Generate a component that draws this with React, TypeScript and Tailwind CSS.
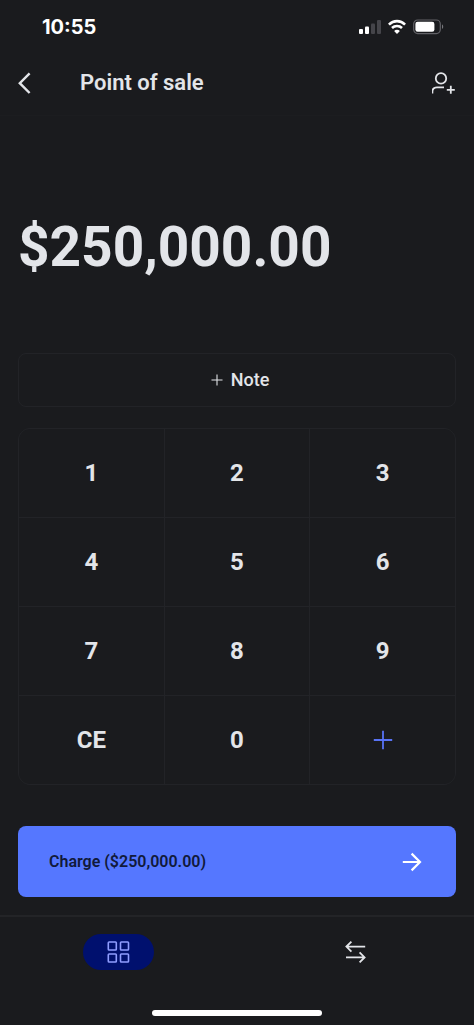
import React, { useState } from "react";

const KEYS = [
	"1",
	"2",
	"3",
	"4",
	"5",
	"6",
	"7",
	"8",
	"9",
	"CE",
	"0",
	"+",
];

const formatAmount = (cents: number) =>
	new Intl.NumberFormat("en-US", {
		style: "currency",
		currency: "USD",
	}).format(cents / 100);

function StatusBar() {
	return (
		<div className="flex h-[54px] items-center justify-between pl-[42px] pr-[30px] text-white">
			<span className="font-['Inter',sans-serif] text-[20px] leading-6 font-bold">
				10:55
			</span>
			<div className="flex items-center gap-[7px]">
				<svg
					width="22"
					height="16"
					viewBox="0 0 22 16"
					fill="currentColor"
				>
					<rect x="0" y="10" width="4" height="5" rx="1" />
					<rect x="6" y="7.5" width="4" height="7.5" rx="1" />
					<g fill="#45454a">
						<rect x="12" y="4.5" width="4" height="10.5" rx="1" />
						<rect x="18" y="1" width="4" height="14" rx="1" />
					</g>
				</svg>
				<svg
					width="18"
					height="16"
					viewBox="0 0 18 16"
					fill="none"
					stroke="currentColor"
					strokeWidth="2.6"
				>
					<path d="M0.9 5.6C5.4 1 12.6 1 17.1 5.6" />
					<path d="M4 9C6.8 6.3 11.2 6.3 14 9" />
					<path
						d="M9 15L6.1 11.9C7.7 10.5 10.3 10.5 11.9 11.9Z"
						fill="currentColor"
						stroke="none"
					/>
				</svg>
				<svg
					width="31"
					height="16"
					viewBox="0 0 31 16"
					fill="none"
				>
					<rect
						x="0.7"
						y="1"
						width="26.6"
						height="13.6"
						rx="4"
						stroke="#626267"
						strokeWidth="1.2"
					/>
					<rect
						x="2.4"
						y="2.8"
						width="19"
						height="10"
						rx="2.2"
						fill="currentColor"
					/>
					<path
						d="M29 5.6C30.6 6.2 30.6 9.4 29 10Z"
						fill="#77777c"
					/>
				</svg>
			</div>
		</div>
	);
}

function Header() {
	return (
		<header className="flex h-[62px] items-center border-b border-[#1c1d20] pl-3 pr-[18px] pb-1">
			<button
				type="button"
				aria-label="Back"
				className="flex size-6 items-center justify-center"
			>
				<svg
					width="24"
					height="24"
					viewBox="0 0 24 24"
					fill="none"
					stroke="currentColor"
					strokeWidth="2.4"
				>
					<path d="M17.6 2.4L7.8 12.2L17.6 22" />
				</svg>
			</button>
			<h1 className="ml-11 flex-1 text-[22px] leading-7 font-semibold">
				Point of sale
			</h1>
			<button
				type="button"
				aria-label="Add customer"
				className="flex size-6 items-center justify-center"
			>
				<svg
					width="24"
					height="24"
					viewBox="0 0 24 24"
					fill="none"
					stroke="currentColor"
					strokeWidth="1.8"
				>
					<circle cx="9" cy="7.4" r="5.2" />
					<path d="M0.4 22.4V20.8C0.4 18 2.2 16.3 5 16.3H12" />
					<path d="M18.8 14.8V22.8M14.8 18.8H22.8" />
				</svg>
			</button>
		</header>
	);
}

function PlusIcon({ className }: { className: string }) {
	return (
		<svg
			className={className}
			viewBox="0 0 20 20"
			fill="none"
			stroke="currentColor"
			strokeWidth="1.8"
		>
			<path d="M10 0.8V19.2M0.8 10H19.2" />
		</svg>
	);
}

function BottomNav() {
	return (
		<nav className="flex h-[110px] flex-col items-center border-t-2 border-[#232427] pt-[17px]">
			<div className="grid w-full grid-cols-2 justify-items-center">
				<a
					href="#pos"
					aria-label="Point of sale"
					className="flex h-9 w-[71px] items-center justify-center rounded-full bg-[#00106e] text-[#8f9dff]"
				>
					<svg
						width="24"
						height="24"
						viewBox="0 0 24 24"
						fill="none"
						stroke="currentColor"
						strokeWidth="1.6"
					>
						<rect x="1.3" y="2" width="8" height="8" rx="0.8" />
						<rect x="13.5" y="2" width="8" height="8" rx="0.8" />
						<rect x="1.3" y="14" width="8" height="8" rx="0.8" />
						<rect x="13.5" y="14" width="8" height="8" rx="0.8" />
					</svg>
				</a>
				<a
					href="#transactions"
					aria-label="Transactions"
					className="flex h-9 w-[71px] items-center justify-center"
				>
					<svg
						width="24"
						height="24"
						viewBox="0 0 24 24"
						fill="none"
						stroke="currentColor"
						strokeWidth="1.8"
					>
						<path d="M21.2 6.6H3M7.4 1.6L2.4 6.6L7.4 11.6" />
						<path d="M2 17.4H20.2M15.6 12.4L20.6 17.4L15.6 22.4" />
					</svg>
				</a>
			</div>
			<div className="mt-auto mb-[9px] h-[6px] w-[170px] rounded-full bg-white" />
		</nav>
	);
}

export default function App() {
	const [cents, setCents] = useState(25000000);
	const [total, setTotal] = useState(0);

	const handleKey = (key: string) => {
		if (key === "CE") {
			setCents(0);
			setTotal(0);
		} else if (key === "+") {
			setTotal(total + cents);
			setCents(0);
		} else {
			setCents(cents * 10 + Number(key));
		}
	};

	return (
		<div className="flex min-h-screen flex-col bg-[#1a1b1e] font-['Roboto',sans-serif] text-[#e3e5e9]">
			<StatusBar />
			<Header />

			<main className="flex flex-1 flex-col px-[18px] pb-[18px]">
				<div className="flex flex-1 items-center pt-6">
					<p className="text-[55px] leading-16 font-bold">
						{formatAmount(cents)}
					</p>
				</div>

				<button
					type="button"
					className="flex h-[54px] items-center justify-center gap-2 rounded-lg border border-[#222327] pl-1.5 text-lg font-medium"
				>
					<PlusIcon className="size-3" />
					Note
				</button>

				<div className="mt-[21px] grid grid-cols-3 gap-px overflow-hidden rounded-xl border border-[#222327] bg-[#222327]">
					{KEYS.map((key) => (
						<button
							key={key}
							type="button"
							aria-label={key === "+" ? "Add" : undefined}
							onClick={() => handleKey(key)}
							className="flex h-22 items-center justify-center bg-[#1a1b1e] text-2xl font-bold"
						>
							{key === "+" ? (
								<PlusIcon className="size-5 text-[#5873f5]" />
							) : (
								key
							)}
						</button>
					))}
				</div>

				<button
					type="button"
					className="mt-[41px] flex h-[71px] items-center justify-between rounded-lg bg-[#5577ff] pl-[31px] pr-[34px] text-base font-semibold text-[#111a3a]"
				>
					Charge ({formatAmount(total + cents)})
					<svg
						width="20"
						height="20"
						viewBox="0 0 20 20"
						fill="none"
						stroke="#ffffff"
						strokeWidth="2.2"
					>
						<path d="M0.8 10H18M9.6 1.6L18 10L9.6 18.4" />
					</svg>
				</button>
			</main>

			<BottomNav />
		</div>
	);
}
